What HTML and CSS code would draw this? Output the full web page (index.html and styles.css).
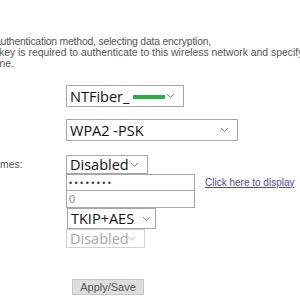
FILE: index.html
```html
<!DOCTYPE html>
<html>
<head>
<meta charset="utf-8">
<link rel="stylesheet" href="styles.css">
</head>
<body>
<div class="desc">
  <div class="line l1">authentication method, selecting data encryption,</div>
  <div class="line l2">key is required to authenticate to this wireless network and specify the encryption strength.</div>
  <div class="line l3">done.</div>
</div>
<div class="form">
  <div class="row r1">
    <div class="label"></div>
    <div class="select s1"><span class="val">NTFiber_</span><span class="bar"></span><svg class="chev" width="9" height="6" viewBox="0 0 9 6"><path d="M1 1 L4.5 4.5 L8 1" fill="none" stroke="#8a8a8a" stroke-width="1"/></svg></div>
  </div>
  <div class="row r2">
    <div class="label"></div>
    <div class="select s2"><span class="val">WPA2 -PSK</span><svg class="chev" width="9" height="6" viewBox="0 0 9 6"><path d="M1 1 L4.5 4.5 L8 1" fill="none" stroke="#8a8a8a" stroke-width="1"/></svg></div>
  </div>
  <div class="row r3">
    <div class="label lab-pmf"><span>mes:</span></div>
    <div class="select s3"><span class="val">Disabled</span><svg class="chev" width="9" height="6" viewBox="0 0 9 6"><path d="M1 1 L4.5 4.5 L8 1" fill="none" stroke="#8a8a8a" stroke-width="1"/></svg></div>
  </div>
  <div class="row r4">
    <div class="label"></div>
    <div class="input pw"><span class="dots">••••••••</span></div>
    <a class="link" href="#">Click here to display</a>
  </div>
  <div class="row r5">
    <div class="label"></div>
    <div class="input num">0</div>
  </div>
  <div class="row r6">
    <div class="label"></div>
    <div class="select s4"><span class="val">TKIP+AES</span><svg class="chev" width="9" height="6" viewBox="0 0 9 6"><path d="M1 1 L4.5 4.5 L8 1" fill="none" stroke="#8a8a8a" stroke-width="1"/></svg></div>
  </div>
  <div class="row r7">
    <div class="label"></div>
    <div class="select s5 dis"><span class="val">Disabled</span><svg class="chev" width="9" height="6" viewBox="0 0 9 6"><path d="M1 1 L4.5 4.5 L8 1" fill="none" stroke="#c4c4c4" stroke-width="1"/></svg></div>
  </div>
  <div class="row r8">
    <div class="label"></div>
    <button class="btn">Apply/Save</button>
  </div>
</div>
</body>
</html>
```
FILE: styles.css
```css
html, body {
  margin: 0;
  padding: 0;
  background: #fff;
  overflow: hidden;
}
body {
  width: 300px;
  height: 300px;
  font-family: "Liberation Sans", Arial, sans-serif;
}
.desc {
  padding-top: 36px;
  font-size: 10.4px;
  line-height: 11px;
  color: #555;
  white-space: nowrap;
}
.l1 { margin-left: -5px; letter-spacing: -0.2px; }
.l2 { margin-left: -1px; }
.l3 { margin-left: -12px; }
.form {
  display: flex;
  flex-direction: column;
}
.row {
  display: flex;
  align-items: center;
  white-space: nowrap;
}
.label {
  width: 66px;
  flex: none;
  font-size: 10.4px;
  color: #555;
}
.r1 { margin-top: 16px; }
.r2 { margin-top: 12px; }
.r3 { margin-top: 14px; }
.r8 { margin-top: 31px; }
.select {
  box-sizing: border-box;
  display: flex;
  align-items: center;
  border: 1px solid #a6a6a6;
  background: #fff;
  font-family: "Open Sans", sans-serif;
  font-size: 14.5px;
  color: #111;
  padding-left: 3px;
  position: relative;
}
.chev {
  position: absolute;
  right: 8px;
  top: 50%;
  margin-top: -3px;
}
.s1 { width: 118px; height: 22px; }
.s2 { width: 172px; height: 22px; }
.s3 { width: 82px; height: 19px; }
.s4 { width: 89px; height: 21px; margin-left: 1px; }
.s4 .chev { right: 4px; }
.s5 { width: 79px; height: 19px; }
.dis { color: #a8a8a8; border-color: #d2d2d2; }
.bar {
  display: inline-block;
  width: 32px;
  height: 4px;
  background: #2aae4a;
  margin-left: 4px;
  margin-top: 1px;
}
.input {
  box-sizing: border-box;
  width: 129px;
  height: 17px;
  border: 1px solid #a6a6a6;
  font-size: 11px;
  padding-left: 2px;
  display: flex;
  align-items: center;
  flex: none;
}
.num { color: #888; border-top: none; }
.dots {
  font-size: 9px;
  letter-spacing: 2.4px;
  color: #444;
}
.link {
  margin-left: 10px;
  font-size: 10px;
  line-height: 12px;
  color: #4a4aa0;
  text-decoration: underline;
}
.btn {
  margin: 0 0 0 6px;
  box-sizing: border-box;
  width: 72px;
  height: 16px;
  padding: 0;
  border: 1px solid #c8c8c8;
  background: #dedede;
  color: #555;
  font-family: "Liberation Sans", Arial, sans-serif;
  font-size: 11px;
  line-height: 14px;
}
```
